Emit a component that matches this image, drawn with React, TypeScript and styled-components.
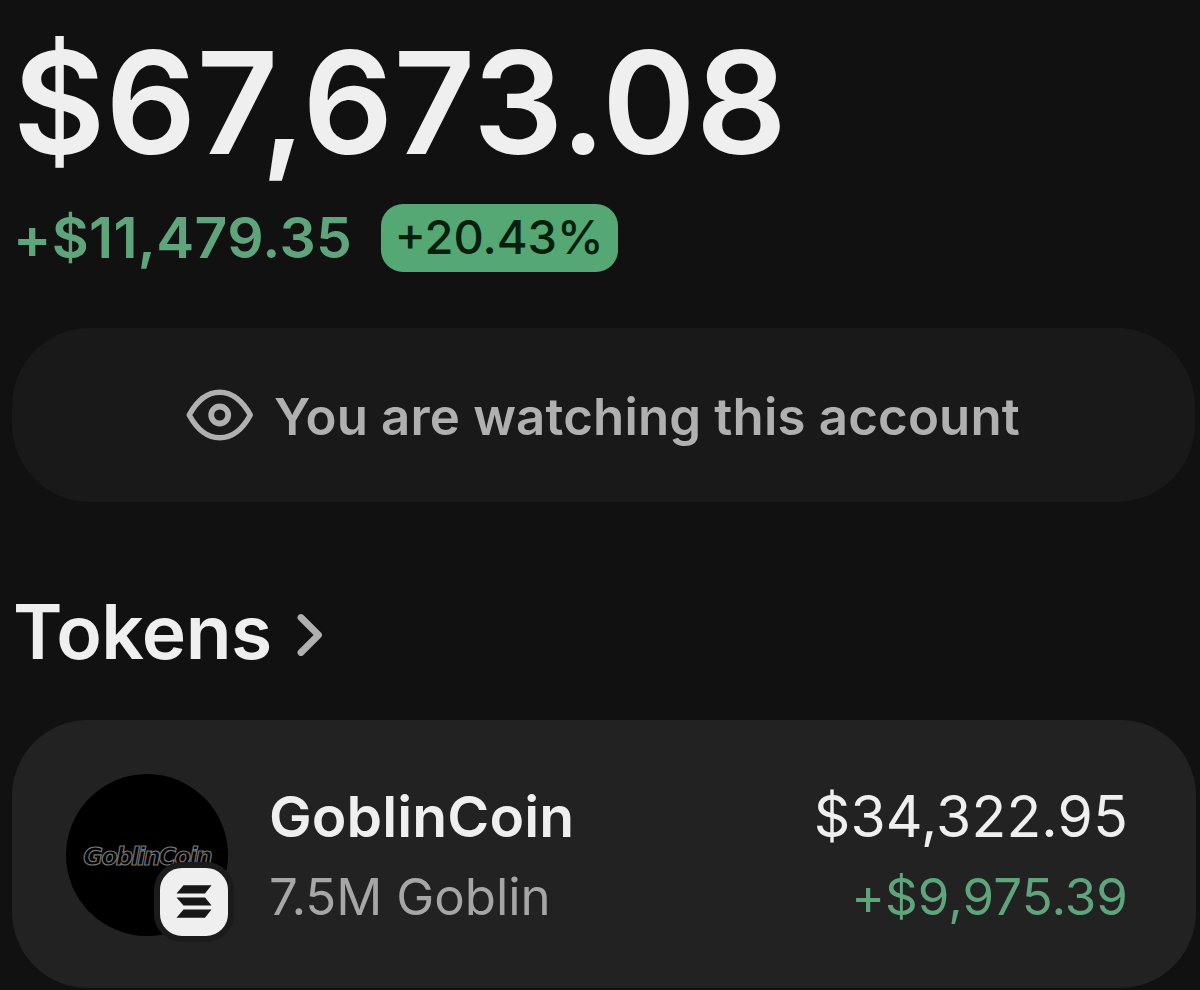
import styled, { createGlobalStyle } from "styled-components";

const GlobalStyle = createGlobalStyle`
  * {
    box-sizing: border-box;
  }

  body {
    margin: 0;
    background-color: #111111;
    font-family: "Inter", sans-serif;
    overflow: hidden;
  }
`;

type TextProps = {
  $size: number;
  $weight?: number;
  $spacing?: number;
  $color?: string;
};

export default function App() {
  return (
    <>
      <GlobalStyle />
      <Screen>
        <Balance>$67,673.08</Balance>
        <ChangeRow>
          <ChangeAmount>+$11,479.35</ChangeAmount>
          <ChangeBadge>+20.43%</ChangeBadge>
        </ChangeRow>

        <Notice>
          <EyeIcon />
          <NoticeText>You are watching this account</NoticeText>
        </Notice>

        <SectionHeader>
          <SectionTitle>Tokens</SectionTitle>
          <ChevronIcon />
        </SectionHeader>

        <TokenCard>
          <Avatar>
            <AvatarLabel>GoblinCoin</AvatarLabel>
            <ChainBadge>
              <SolanaIcon />
            </ChainBadge>
          </Avatar>
          <TokenColumn>
            <Line $size={57} $weight={620} $spacing={0.1}>
              GoblinCoin
            </Line>
            <Line $size={51} $spacing={-0.1} $color="#a6a6a6">
              7.5M Goblin
            </Line>
          </TokenColumn>
          <ValueColumn>
            <Line $size={57} $spacing={0.2}>
              $34,322.95
            </Line>
            <Line $size={51} $spacing={0.05} $color="#5fa57c">
              +$9,975.39
            </Line>
          </ValueColumn>
        </TokenCard>
      </Screen>
    </>
  );
}

function EyeIcon() {
  return (
    <svg width="68" height="52" viewBox="0 0 68 52" fill="none" stroke="#b0b0b0" strokeWidth="5.4">
      <path
        d="M3.2 26C10 13.500 20.500 3.200 33.700 3.200S57.500 13.500 64.300 26C57.500 38.500 47 48.800 33.700 48.800S10 38.500 3.200 26Z"
        strokeLinejoin="round"
      />
      <circle cx="33.700" cy="26" r="8.500" strokeWidth="5.800" />
    </svg>
  );
}

function ChevronIcon() {
  return (
    <svg width="26" height="44" viewBox="0 0 26 44" fill="none" stroke="#b0b0b0">
      <path d="M4 4.500L21.500 22L4 39.500" strokeWidth="6.800" strokeLinecap="round" strokeLinejoin="round" />
    </svg>
  );
}

function SolanaIcon() {
  return (
    <svg width="36" height="34" viewBox="0 0 36 34" fill="#161616">
      <path d="M7.500 0.300H35.500L29 8.600H0.500Z" />
      <path d="M0.500 12.500H29L35.500 20.500H7.500Z" />
      <path d="M7.500 24.500H35.500L29 32.700H0.500Z" />
    </svg>
  );
}

const Screen = styled.main`
  display: flex;
  flex-direction: column;
  width: 1200px;
  height: 990px;
  padding: 30px 4px 0 12px;
  background-color: #111111;
  color: #efefef;
  overflow: hidden;
`;

const Balance = styled.h1`
  margin: 0 0 0 1px;
  font-size: 142px;
  font-weight: 600;
  line-height: 145px;
  letter-spacing: 0.2px;
  white-space: nowrap;
`;

const ChangeRow = styled.div`
  display: flex;
  align-items: center;
  height: 68px;
  margin: 28.500px 0 0 1px;
`;

const ChangeAmount = styled.span`
  width: 367.500px;
  font-size: 57px;
  font-weight: 600;
  letter-spacing: 0.3px;
  line-height: 67px;
  color: #5fa57c;
  white-space: nowrap;
`;

const ChangeBadge = styled.span`
  width: 237px;
  height: 68px;
  padding-left: 14px;
  border-radius: 22px;
  background-color: #55a874;
  color: #04200d;
  font-size: 47px;
  font-weight: 550;
  line-height: 66px;
  letter-spacing: 0;
  white-space: nowrap;
`;

const Notice = styled.section`
  display: flex;
  align-items: center;
  gap: 20px;
  width: 1183px;
  height: 174px;
  margin-top: 56.500px;
  padding-left: 174px;
  border-radius: 78px;
  background-color: #191919;
`;

const NoticeText = styled.p`
  margin: 4px 0 0;
  font-size: 51px;
  font-weight: 600;
  line-height: 60px;
  letter-spacing: 0.16px;
  color: #b0b0b0;
  white-space: nowrap;
`;

const SectionHeader = styled.header`
  display: flex;
  align-items: center;
  height: 80px;
  margin: 90px 0 0 1px;

  svg {
    margin-top: 6px;
  }
`;

const SectionTitle = styled.h2`
  width: 284px;
  margin: 0;
  font-size: 75px;
  font-weight: 600;
  line-height: 80px;
  letter-spacing: -0.5px;
`;

const TokenCard = styled.article`
  display: flex;
  align-items: flex-start;
  width: 1184px;
  height: 268px;
  margin-top: 48px;
  padding: 54px 68px 0 54px;
  border-radius: 76px;
  background-color: #222222;
`;

const Avatar = styled.div`
  position: relative;
  display: flex;
  align-items: center;
  justify-content: center;
  flex: none;
  width: 162px;
  height: 162px;
  border-radius: 50%;
  background-color: #000000;
`;

const AvatarLabel = styled.span`
  margin-top: 3px;
  font-family: "DejaVu Sans", sans-serif;
  font-size: 24px;
  font-style: italic;
  font-weight: 700;
  letter-spacing: -1.9px;
  color: #000000;
  -webkit-text-stroke: 1.2px #777777;
`;

const ChainBadge = styled.div`
  position: absolute;
  right: -6px;
  bottom: -6px;
  display: flex;
  align-items: center;
  justify-content: center;
  width: 80px;
  height: 80px;
  border: 6px solid #1b1b1b;
  border-radius: 28px;
  background-color: #efefef;
`;

const TokenColumn = styled.div`
  display: flex;
  flex-direction: column;
  gap: 10px;
  margin: 8px 0 0 41px;
`;

const ValueColumn = styled(TokenColumn)`
  align-items: flex-end;
  margin-left: auto;
`;

const Line = styled.span<TextProps>`
  font-size: ${({ $size }) => $size}px;
  font-weight: ${({ $weight }) => $weight ?? 400};
  letter-spacing: ${({ $spacing }) => $spacing ?? 0}px;
  line-height: 70px;
  color: ${({ $color }) => $color ?? "#efefef"};
  white-space: nowrap;
`;
